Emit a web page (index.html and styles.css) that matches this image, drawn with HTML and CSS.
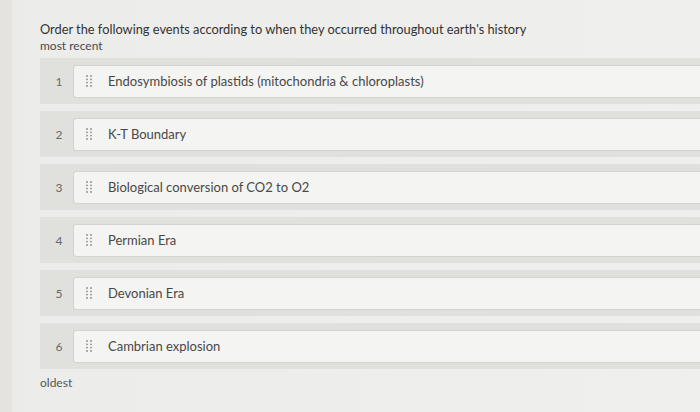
FILE: index.html
```html
<!DOCTYPE html>
<html lang="en">
<head>
<meta charset="utf-8">
<title>Ordering question</title>
<link rel="stylesheet" href="styles.css">
</head>
<body>
<div class="page">
  <p class="prompt">Order the following events according to when they occurred throughout earth's history</p>
  <p class="label top">most recent</p>
  <ol class="list">
    <li class="row"><span class="num">1</span><div class="card"><svg class="handle" width="6" height="12" viewBox="0 0 6 12"><g fill="#8a8a86"><circle cx="1" cy="1" r="0.9"/><circle cx="5" cy="1" r="0.9"/><circle cx="1" cy="4.3" r="0.9"/><circle cx="5" cy="4.3" r="0.9"/><circle cx="1" cy="7.6" r="0.9"/><circle cx="5" cy="7.6" r="0.9"/><circle cx="1" cy="11" r="0.9"/><circle cx="5" cy="11" r="0.9"/></g></svg><span class="text">Endosymbiosis of plastids (mitochondria &amp; chloroplasts)</span></div></li>
    <li class="row"><span class="num">2</span><div class="card"><svg class="handle" width="6" height="12" viewBox="0 0 6 12"><g fill="#8a8a86"><circle cx="1" cy="1" r="0.9"/><circle cx="5" cy="1" r="0.9"/><circle cx="1" cy="4.3" r="0.9"/><circle cx="5" cy="4.3" r="0.9"/><circle cx="1" cy="7.6" r="0.9"/><circle cx="5" cy="7.6" r="0.9"/><circle cx="1" cy="11" r="0.9"/><circle cx="5" cy="11" r="0.9"/></g></svg><span class="text">K-T Boundary</span></div></li>
    <li class="row"><span class="num">3</span><div class="card"><svg class="handle" width="6" height="12" viewBox="0 0 6 12"><g fill="#8a8a86"><circle cx="1" cy="1" r="0.9"/><circle cx="5" cy="1" r="0.9"/><circle cx="1" cy="4.3" r="0.9"/><circle cx="5" cy="4.3" r="0.9"/><circle cx="1" cy="7.6" r="0.9"/><circle cx="5" cy="7.6" r="0.9"/><circle cx="1" cy="11" r="0.9"/><circle cx="5" cy="11" r="0.9"/></g></svg><span class="text">Biological conversion of CO2 to O2</span></div></li>
    <li class="row"><span class="num">4</span><div class="card"><svg class="handle" width="6" height="12" viewBox="0 0 6 12"><g fill="#8a8a86"><circle cx="1" cy="1" r="0.9"/><circle cx="5" cy="1" r="0.9"/><circle cx="1" cy="4.3" r="0.9"/><circle cx="5" cy="4.3" r="0.9"/><circle cx="1" cy="7.6" r="0.9"/><circle cx="5" cy="7.6" r="0.9"/><circle cx="1" cy="11" r="0.9"/><circle cx="5" cy="11" r="0.9"/></g></svg><span class="text">Permian Era</span></div></li>
    <li class="row"><span class="num">5</span><div class="card"><svg class="handle" width="6" height="12" viewBox="0 0 6 12"><g fill="#8a8a86"><circle cx="1" cy="1" r="0.9"/><circle cx="5" cy="1" r="0.9"/><circle cx="1" cy="4.3" r="0.9"/><circle cx="5" cy="4.3" r="0.9"/><circle cx="1" cy="7.6" r="0.9"/><circle cx="5" cy="7.6" r="0.9"/><circle cx="1" cy="11" r="0.9"/><circle cx="5" cy="11" r="0.9"/></g></svg><span class="text">Devonian Era</span></div></li>
    <li class="row"><span class="num">6</span><div class="card"><svg class="handle" width="6" height="12" viewBox="0 0 6 12"><g fill="#8a8a86"><circle cx="1" cy="1" r="0.9"/><circle cx="5" cy="1" r="0.9"/><circle cx="1" cy="4.3" r="0.9"/><circle cx="5" cy="4.3" r="0.9"/><circle cx="1" cy="7.6" r="0.9"/><circle cx="5" cy="7.6" r="0.9"/><circle cx="1" cy="11" r="0.9"/><circle cx="5" cy="11" r="0.9"/></g></svg><span class="text">Cambrian explosion</span></div></li>
  </ol>
  <p class="label bottom">oldest</p>
</div>
</body>
</html>
```

FILE: styles.css
```css
html, body {
  margin: 0;
  padding: 0;
}
body {
  width: 700px;
  height: 412px;
  overflow: hidden;
  background: linear-gradient(to right, #e4e3df 0, #e4e3df 12px, #eaeae7 12px, #ececea 30px, #efefed 100%);
  font-family: Lato, "Open Sans", sans-serif;
  color: #3c3c3c;
}
.page {
  padding: 20px 0 0 40px;
}
.prompt {
  margin: 0;
  font-size: 12.8px;
  line-height: 18px;
  color: #333;
}
.label {
  margin: 0;
  font-size: 12px;
  line-height: 16px;
  color: #4a4a4a;
}
.label.top {
  margin-top: 0;
  margin-bottom: 4px;
}
.label.bottom {
  margin-top: 6px;
  color: #555;
}
.list {
  list-style: none;
  margin: 0;
  padding: 0;
  display: flex;
  flex-direction: column;
  gap: 7px;
}
.row {
  display: flex;
  align-items: center;
  height: 46px;
  background: #e0e0dd;
}
.num {
  box-sizing: border-box;
  width: 33px;
  padding-left: 5px;
  text-align: center;
  font-size: 12px;
  color: #6a6a68;
}
.card {
  flex: 1;
  box-sizing: border-box;
  height: 33px;
  display: flex;
  align-items: center;
  padding-left: 12px;
  background: #f4f4f2;
  border: 1px solid #d3d3d0;
  border-right: 0;
  border-radius: 3px 0 0 3px;
}
.handle {
  flex: none;
}
.text {
  margin-left: 16px;
  font-size: 13px;
  color: #484848;
}
```
